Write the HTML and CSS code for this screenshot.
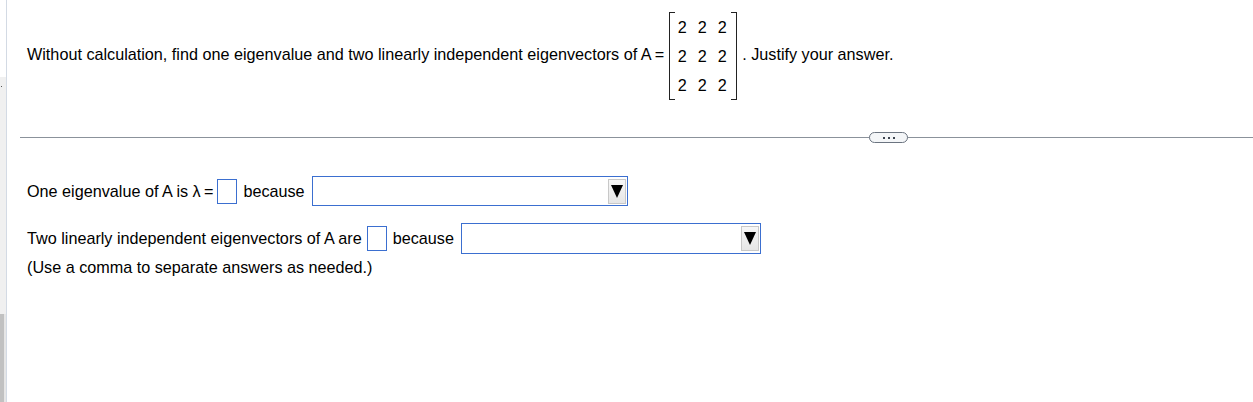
FILE: index.html
```html
<!DOCTYPE html>
<html>
<head>
<meta charset="utf-8">
<link rel="stylesheet" href="styles.css">
</head>
<body>
<div class="rail">
  <div class="rail-top"></div>
  <div class="rail-track"><span class="rail-dot"></span></div>
  <div class="rail-thumb"></div>
</div>
<div class="main">
  <div class="question">
    <span class="qtext">Without calculation, find one eigenvalue and two linearly independent eigenvectors of A&#8201;=</span>
    <div class="matrix">
      <span>2</span><span>2</span><span>2</span>
      <span>2</span><span>2</span><span>2</span>
      <span>2</span><span>2</span><span>2</span>
    </div>
    <span class="qtext tail">. Justify your answer.</span>
  </div>
  <div class="divider">
    <div class="pill"><i></i><i></i><i></i></div>
  </div>
  <div class="answers">
    <div class="row row1">
      <span>One eigenvalue of A is λ&#8201;=</span>
      <span class="box box1"></span>
      <span>because</span>
      <span class="select sel1"><span class="arrow"></span></span>
    </div>
    <div class="row row2">
      <span>Two linearly independent eigenvectors of A are</span>
      <span class="box box2"></span>
      <span>because</span>
      <span class="select sel2"><span class="arrow"></span></span>
    </div>
    <div class="note">(Use a comma to separate answers as needed.)</div>
  </div>
</div>
</body>
</html>
```
FILE: styles.css
```css
html, body {
  margin: 0;
  padding: 0;
  background: #ffffff;
}
body {
  display: flex;
  height: 402px;
  overflow: hidden;
  font-family: "Liberation Sans", Arial, sans-serif;
  font-size: 16.2px;
  color: #000000;
}
.rail {
  width: 6px;
  border-right: 1px solid #d3dae4;
  display: flex;
  flex-direction: column;
}
.rail-top {
  height: 77px;
  background: #ffffff;
}
.rail-track {
  height: 237px;
  background: #f0f0f0;
  position: relative;
}
.rail-dot {
  position: absolute;
  left: 1px;
  top: 9px;
  width: 1px;
  height: 1px;
  background: #555;
}
.rail-thumb {
  flex: 1;
  background: linear-gradient(to right, #c1c1c1 0, #c1c1c1 4px, #e6e6e6 4px);
}
.main {
  flex: 1;
}
.question {
  display: flex;
  align-items: center;
  padding: 12px 0 0 20px;
  height: 88px;
}
.qtext {
  margin-bottom: 3px;
}
.matrix {
  margin-left: 5px;
  display: grid;
  grid-template-columns: repeat(3, 20px);
  grid-auto-rows: 29px;
  align-items: center;
  justify-items: center;
  padding: 0 4px 0 2px;
  height: 88px;
  align-content: center;
  position: relative;
  border-left: 1.5px solid #222;
  border-right: 1.5px solid #222;
  box-sizing: border-box;
}
.matrix::before,
.matrix::after {
  content: "";
  position: absolute;
  top: 0;
  bottom: 0;
  width: 5px;
  border-top: 1.5px solid #222;
  border-bottom: 1.5px solid #222;
}
.matrix::before { left: 0; }
.matrix::after { right: 0; }
.tail {
  margin-left: 5px;
}
.divider {
  margin: 37px 0 0 13px;
  height: 1px;
  background: #8b929b;
  position: relative;
}
.pill {
  position: absolute;
  left: 849px;
  top: -5px;
  width: 37px;
  height: 9px;
  border: 1px solid #6b7480;
  border-radius: 6px;
  background: #f4f6f8;
  display: flex;
  align-items: center;
  justify-content: center;
  gap: 3px;
}
.pill i {
  width: 2px;
  height: 2px;
  background: #3d4550;
}
.answers {
  padding: 38px 0 0 20px;
}
.row {
  display: flex;
  align-items: center;
}
.row1 { height: 30px; }
.row2 { height: 31px; margin-top: 17px; }
.box {
  width: 18px;
  height: 23px;
  border: 1px solid #3b6fd0;
  display: inline-block;
}
.box1 { margin: 0 6px 0 4px; }
.box2 { margin: 0 6px 0 5px; }
.select {
  width: 313px;
  height: 28px;
  border: 1px solid #3b6fd0;
  display: flex;
  justify-content: flex-end;
  align-items: center;
  padding-right: 1px;
  box-sizing: content-box;
}
.sel1 { margin-left: 7px; }
.sel2 { width: 297px; height: 29px; margin-left: 7px; }
.arrow {
  width: 16px;
  height: 23px;
  border: 1px solid #c8c8c8;
  background: linear-gradient(#f7f7f7, #e6e6e6);
  display: flex;
  align-items: center;
  justify-content: center;
  box-sizing: content-box;
}
.arrow::before {
  content: "";
  width: 0;
  height: 0;
  border-left: 6px solid transparent;
  border-right: 6px solid transparent;
  border-top: 13px solid #000;
}
.note {
  margin-top: 4px;
}
```
